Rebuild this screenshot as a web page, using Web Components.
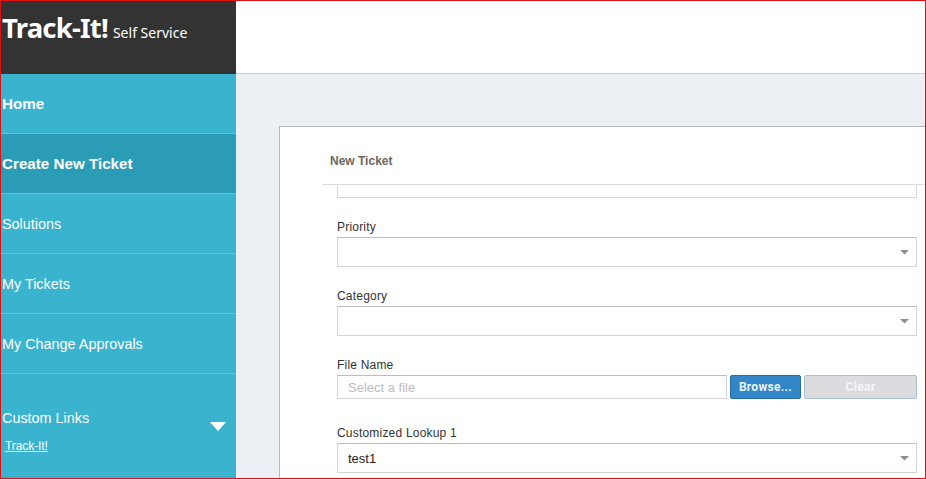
<!DOCTYPE html>
<html><head><meta charset="utf-8">
<style>
html,body{margin:0;padding:0;height:100%;overflow:hidden;background:#fff;font-family:"Liberation Sans",Arial,sans-serif}
</style></head><body>
<ti-app>
  <ti-sidebar slot="side">
    <ti-nav-item bold>Home</ti-nav-item>
    <ti-nav-item bold active>Create New Ticket</ti-nav-item>
    <ti-nav-item>Solutions</ti-nav-item>
    <ti-nav-item>My Tickets</ti-nav-item>
    <ti-nav-item>My Change Approvals</ti-nav-item>
    <ti-custom-links></ti-custom-links>
  </ti-sidebar>
  <ti-ticket-card slot="main">
    <ti-field stub></ti-field>
    <ti-field label="Priority" type="select"></ti-field>
    <ti-field label="Category" type="select"></ti-field>
    <ti-file-field label="File Name"></ti-file-field>
    <ti-field label="Customized Lookup 1" type="select" value="test1"></ti-field>
  </ti-ticket-card>
</ti-app>
<script>
function def(name, html, init){
  customElements.define(name, class extends HTMLElement{
    constructor(){super();this.attachShadow({mode:'open'}).innerHTML=html;}
    connectedCallback(){ if(init) init(this,this.shadowRoot); }
  });
}
def('ti-app',`<style>
:host{display:grid;grid-template-columns:235px 1fr;grid-template-rows:73px 1fr;box-sizing:border-box;width:926px;height:479px;border:1px solid #e01010;overflow:hidden;background:#ecEFF4}
.logo{background:#333;color:#fff;display:flex;align-items:baseline;padding:8px 0 0 1px;box-sizing:border-box;font-family:"Noto Sans","Open Sans",sans-serif;white-space:nowrap}
.logo b{font-size:27.5px;font-weight:700;letter-spacing:-.8px;line-height:38px}
.logo span{font-size:14px;margin-left:5px;letter-spacing:0}
.top{background:#fff;border-bottom:1px solid #c9cdd2;height:72px}
.side{grid-column:1;grid-row:2;min-height:0;background:#3ab3cf}
.main{grid-column:2;grid-row:2;min-width:0;min-height:0;overflow:hidden;padding:52px 0 0 43px}
</style>
<div class="logo"><b>Track-It!</b><span>Self Service</span></div>
<div class="top"></div>
<div class="side"><slot name="side"></slot></div>
<div class="main"><slot name="main"></slot></div>`);
def('ti-sidebar',`<style>:host{display:flex;flex-direction:column;color:#fff}</style><slot></slot>`);
def('ti-nav-item',`<style>
:host{display:flex;align-items:center;box-sizing:border-box;height:60px;padding:0 0 0 1px;font-size:14.4px;color:#fff;border-bottom:1px solid #5cc3da;white-space:nowrap}
:host([bold]){font-weight:bold;font-size:15.2px}
:host([active]){background:#2a9cb6}
</style><slot></slot>`);
def('ti-custom-links',`<style>
:host{display:block;padding:35px 0 0 1px;font-size:14.4px;color:#fff}
.h{display:flex;justify-content:space-between;align-items:center;height:18px}
svg{margin:16px 10px 0 0}
a{display:block;margin:12px 0 0 3px;font-size:12px;color:#fff;text-decoration:underline;letter-spacing:-.1px}
</style>
<div class="h"><span>Custom Links</span><svg width="16" height="9" viewBox="0 0 16 9"><path d="M0 0H16L8 9Z" fill="#fff"/></svg></div>
<a href="#">Track-It!</a>`);
def('ti-ticket-card',`<style>
:host{display:block;background:#fff;border:1px solid #b4b8bd;border-right:0;height:500px;box-sizing:border-box}
.t{height:58px;box-sizing:border-box;margin-left:42px;border-bottom:1px solid #dcdcdc;padding:27px 0 0 8px;font-size:12px;font-weight:bold;color:#6b6763;line-height:14px}
.body{padding:0 8px 0 57px}
</style>
<div class="t">New Ticket</div>
<div class="body"><slot></slot></div>`);
const labelCss=`.l{display:block;font-size:12px;letter-spacing:.2px;line-height:14px;color:#333;margin-bottom:3px}`;
def('ti-field',`<style>
:host{display:block;margin-bottom:22px}
${labelCss}
.box{display:flex;align-items:center;justify-content:space-between;box-sizing:border-box;height:30px;border:1px solid #d4d4d4;border-top-color:#bdbdbd;background:#fff;font-size:13px;color:#222;padding:0 0 0 10px}
:host([stub]) .box{height:13px;border-top:0;border-color:#d8d8d8}
svg{margin-right:7px;margin-top:1px}
</style><span class="l"></span><div class="box"><span class="v"></span></div>`,(el,s)=>{
  const l=s.querySelector('.l'),v=s.querySelector('.v'),box=s.querySelector('.box');
  if(el.hasAttribute('stub')){l.remove();return;}
  l.textContent=el.getAttribute('label')||'';
  v.textContent=el.getAttribute('value')||'';
  if(el.getAttribute('type')==='select'&&!s.querySelector('svg'))
    box.insertAdjacentHTML('beforeend','<svg width="9" height="5" viewBox="0 0 9 5"><path d="M0 0H9L4.5 4.5Z" fill="#8f8f8f"/></svg>');
});
def('ti-file-field',`<style>
:host{display:block;margin-bottom:27px}
${labelCss}
.row{display:flex;height:24px;gap:3px}
.in{box-sizing:border-box;width:390px;border:1px solid #d4d4d4;border-top-color:#bdbdbd;font-size:13px;color:#bcbcbc;display:flex;align-items:center;padding-left:10px}
button{box-sizing:border-box;height:24px;border-radius:2px;font:bold 12px "Roboto","Liberation Sans",sans-serif;padding:0;letter-spacing:.3px}
.b{width:71px;background:#3187c8;border:1px solid #2a6d9f;color:#e8f3fb}
.c{width:113px;background:#dcdcde;border:1px solid #a9c0d3;color:#f5f5f5}
</style><span class="l"></span><div class="row"><div class="in">Select a file</div><button class="b">Browse...</button><button class="c">Clear</button></div>`,(el,s)=>{
  s.querySelector('.l').textContent=el.getAttribute('label');
});
</script>
</body></html>
